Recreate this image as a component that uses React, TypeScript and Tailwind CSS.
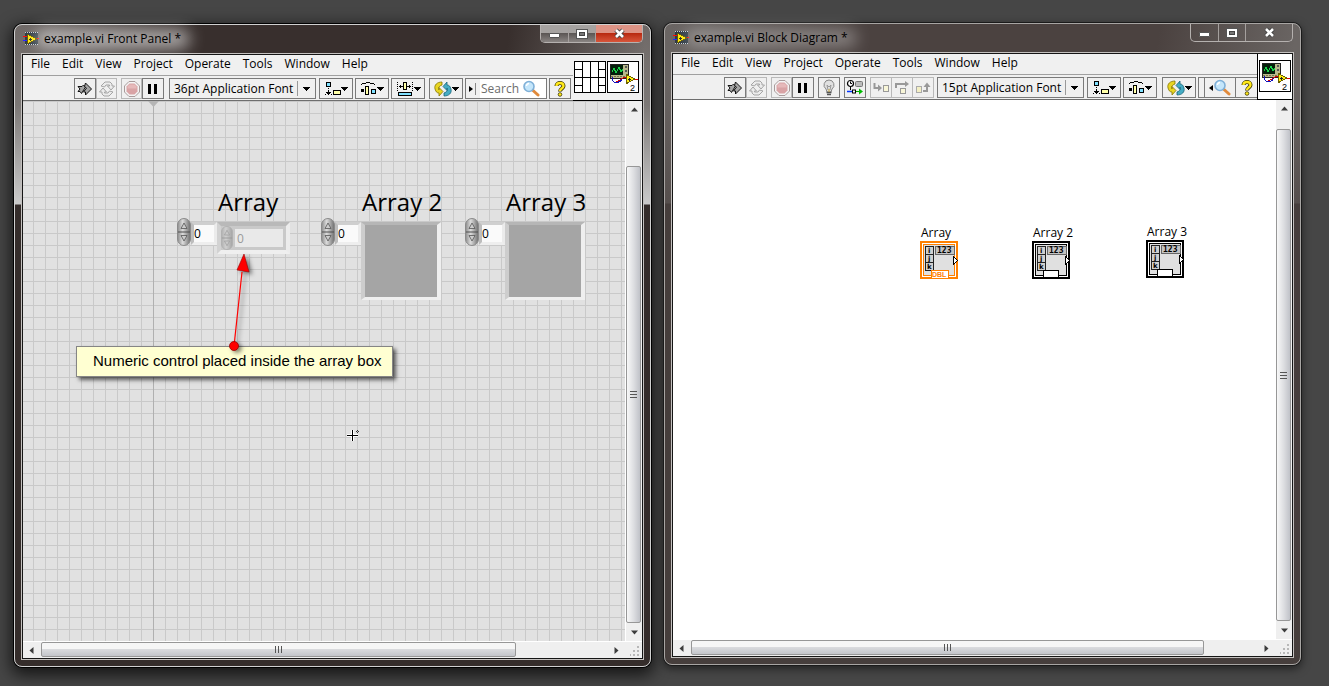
import React from 'react';
import clsx from 'clsx';

const MENUS = ['File', 'Edit', 'View', 'Project', 'Operate', 'Tools', 'Window', 'Help'];

// ── Icons ──
const AppIcon = () => (
  <svg width="16" height="16" viewBox="0 0 16 16" shapeRendering="crispEdges" aria-hidden="true">
    <rect x="2" y="1" width="13" height="13" fill="#2b3640" />
    <path d="M2 1.5h13M2 13.5h13" stroke="#c4ccd2" strokeDasharray="1 1" />
    <path d="M0 5.5h4" stroke="#f00" />
    <path d="M0 9.5h4" stroke="#22f" />
    <path d="M13 7.5h3" stroke="#f00" />
    <path d="M4 3v10l10-5z" fill="#ffe600" stroke="#5d5200" />
    <path d="M6 8.5h3M7.5 7v3" stroke="#222" />
  </svg>
);

const RunIcon = () => (
  <svg width="16" height="14" viewBox="0 0 16 14" fill="#a4a4a4" stroke="#111" aria-hidden="true">
    <path d="M1 4.5h4L6.5 3l2 2L4.5 11.5 3 9.5H1L3 7z" />
    <path d="M8.5 1l6 6-6 6v-3H6.5L9.5 6l-2-1.5z" />
  </svg>
);

const RunLoopIcon = () => (
  <svg width="18" height="16" viewBox="0 0 18 16" fill="#ececec" stroke="#a5a5a5" aria-hidden="true">
    <path d="M3 5l4-4h5l2 2v2h2.5L13 9 9.5 5h2V4H8L6.5 6z" />
    <path d="M15 11l-4 4H6l-2-2v-2H1.5L5 7l3.5 4h-2v1H10l1.5-2z" />
  </svg>
);

const AbortIcon = () => (
  <svg width="16" height="16" viewBox="0 0 16 16" aria-hidden="true">
    <path d="M5 0.5h6L15.5 5v6L11 15.5H5L0.5 11V5z" fill="#f4f4f4" stroke="#a99b9b" />
    <path d="M5.5 2.5h5l3 3v5l-3 3h-5l-3-3v-5z" fill="#d9a3a5" />
    <path d="M5.5 3.5h5l2 2v2h-9v-2z" fill="#e6b9ba" />
  </svg>
);

const PauseIcon = () => (
  <svg width="10" height="12" viewBox="0 0 10 12" shapeRendering="crispEdges" aria-hidden="true">
    <path d="M0 1h3v10H0zM6 1h3v10H6z" fill="#000" />
  </svg>
);

const BulbIcon = () => (
  <svg width="14" height="18" viewBox="0 0 14 18" aria-hidden="true">
    <path d="M7 1a5 5 0 0 0-3 9l1 3h4l1-3a5 5 0 0 0-3-9z" fill="#e0e0e0" stroke="#888" />
    <path d="M5 6l1 5M9 6l-1 5M5 6l2 2 2-2" fill="none" stroke="#999" />
    <path d="M4.5 13.5h5M5 15.5h4" stroke="#555" strokeWidth="1.5" />
    <path d="M7 10v3" stroke="#c9a93c" />
  </svg>
);

const RetainIcon = () => (
  <svg width="18" height="17" viewBox="0 0 18 17" aria-hidden="true">
    <circle cx="4.5" cy="4.5" r="3" fill="#fff" stroke="#000" strokeWidth="1.2" />
    <path d="M4.5 2.5v2h1.5M4.5 8v3" stroke="#000" fill="none" />
    <rect x="9.5" y="2.5" width="7" height="5" rx="1" fill="#bbb" stroke="#777" />
    <path d="M1 12.5h5" stroke="#03f" strokeWidth="1.5" />
    <rect x="6.5" y="11" width="3" height="3" fill="#fff" stroke="#000" />
    <path d="M10 12.5h3" stroke="#0a0" />
    <path d="M13 9.5v6l4-3z" fill="#0b0" />
  </svg>
);

const StepIntoIcon = () => (
  <svg width="17" height="14" viewBox="0 0 17 14" aria-hidden="true">
    <path d="M1.5 2v5H6" stroke="#999" strokeWidth="2" fill="none" />
    <path d="M5 3.5L9 7l-4 3.5z" fill="#999" />
    <rect x="10.5" y="4.5" width="5" height="6" fill="#f8f6d8" stroke="#999" />
  </svg>
);

const StepOverIcon = () => (
  <svg width="17" height="14" viewBox="0 0 17 14" aria-hidden="true">
    <path d="M2 7V3h10" stroke="#999" strokeWidth="2" fill="none" />
    <path d="M11 0l4 3-4 3z" fill="#999" />
    <rect x="6.5" y="7.5" width="5" height="5" fill="#f8f6d8" stroke="#999" />
  </svg>
);

const StepOutIcon = () => (
  <svg width="17" height="14" viewBox="0 0 17 14" aria-hidden="true">
    <rect x="1.5" y="5.5" width="5" height="6" fill="#f3efc4" stroke="#aaa" />
    <path d="M8 10h4V5" stroke="#999" strokeWidth="2" fill="none" />
    <path d="M8.5 6L12 1.5 15.5 6z" fill="#999" />
  </svg>
);

const AlignIcon = () => (
  <svg width="16" height="16" viewBox="0 0 16 16" shapeRendering="crispEdges" aria-hidden="true">
    <rect x="1.5" y="1.5" width="4" height="4" fill="#7fe0ff" stroke="#000" />
    <path d="M3 7h1v1H3zM3 9h1v2H3zM1 11h5v1H1zM2 12h3v1H2zM3 13h1v1H3zM0 14h1v-1H0zM6 13h1v1H6z" fill="#000" />
    <rect x="8.5" y="9.5" width="7" height="4" fill="#ffffa8" stroke="#000" />
  </svg>
);

const DistributeIcon = () => (
  <svg width="17" height="16" viewBox="0 0 17 16" shapeRendering="crispEdges" aria-hidden="true">
    <path d="M1 3h1v1H1zM2 2h4v1H2zM6 1h4v1H6zM10 2h4v1h-4zM14 3h1v1h-1z" fill="#000" />
    <rect x="1" y="8" width="3" height="3" fill="#000" />
    <rect x="5.5" y="5.5" width="3" height="8" fill="#ffffa8" stroke="#000" />
    <rect x="11.5" y="8.5" width="4" height="4" fill="#7fe0ff" stroke="#000" />
  </svg>
);

const ResizeIcon = () => (
  <svg width="18" height="16" viewBox="0 0 18 16" shapeRendering="crispEdges" aria-hidden="true">
    <path d="M1.5 1v10M16.5 1v10" stroke="#000" strokeDasharray="1 1" />
    <path d="M3 5h4v1H3zM11 5h4v1h-4zM4 4h1v3H4zM13 4h1v3h-1z" fill="#000" />
    <rect x="7.5" y="1.5" width="3" height="7" fill="#ffffa8" stroke="#000" />
    <rect x="2.5" y="11.5" width="13" height="3" fill="#7fe0ff" stroke="#000" />
  </svg>
);

const ReorderIcon = () => (
  <svg width="18" height="16" viewBox="0 0 18 16" strokeWidth="0.8" aria-hidden="true">
    <path d="M8 1C3 1 0 4 1 8c1 3 2 4 4 4v3l4-4.5L5 6.5V9C4 7 5 5 8 4z" fill="#e8d522" stroke="#857500" />
    <path d="M10 15c5 0 8-3 7-7-1-3-2-4-4-4V1L9 5.5l4 4V7c1 2 0 4-3 5z" fill="#45acc4" stroke="#16657a" />
  </svg>
);

const SearchGlass = () => (
  <svg width="18" height="17" viewBox="0 0 18 17" className="shrink-0" aria-hidden="true">
    <path d="M10.5 10l5.5 5" stroke="#e08a3c" strokeWidth="3" strokeLinecap="round" />
    <circle cx="7" cy="6.5" r="5" fill="#c4e6fb" stroke="#7fb0d8" strokeWidth="1.6" />
    <path d="M4.5 6a2.5 2.5 0 0 1 2.5-2.5" stroke="#fff" strokeWidth="1.5" fill="none" />
  </svg>
);

const HelpMark = () => (
  <svg width="12" height="16" viewBox="0 0 12 16" aria-hidden="true">
    <path d="M2.5 5c0-4 7-4 7 0 0 2.5-3.5 2.5-3.5 5.5" fill="none" stroke="#3a3500" strokeWidth="4" />
    <path d="M2.5 5c0-4 7-4 7 0 0 2.5-3.5 2.5-3.5 5" fill="none" stroke="#ffe81a" strokeWidth="2.4" />
    <circle cx="6" cy="13.5" r="1.8" fill="#ffe81a" stroke="#3a3500" strokeWidth="0.8" />
  </svg>
);

const ConnectorPane = () => (
  <svg width="32" height="32" viewBox="0 0 32 32" shapeRendering="crispEdges" aria-hidden="true">
    <rect x="0.5" y="0.5" width="31" height="31" fill="#fff" stroke="#000" />
    <path d="M8.5 0v32M16.5 0v32M24.5 0v32M0 16.5h32M0 8.5h8M0 24.5h8M24 8.5h8M24 24.5h8" stroke="#000" />
  </svg>
);

const ViIcon = () => (
  <svg width="32" height="32" viewBox="0 0 32 32" shapeRendering="crispEdges" aria-hidden="true">
    <rect x="0.5" y="0.5" width="31" height="31" fill="#fff" stroke="#000" />
    <rect x="3.5" y="3.5" width="18" height="14" fill="#b9b98c" stroke="#222" />
    <rect x="4" y="4" width="12" height="10" fill="#03200a" />
    <path d="M5 11l2-4 2 5 3-6 2 5 2-3" fill="none" stroke="#18d44a" />
    <path d="M18 5h2v2h-2zM18 9h2v2h-2z" fill="#555" />
    <path d="M4 15.5h16" stroke="#77774f" strokeDasharray="2 1" />
    <path d="M5 16v3c2 4 8 3 10-1" fill="none" stroke="#1010c0" />
    <path d="M9 20c4 2 4-5 10-3M27 18.5h4" fill="none" stroke="#e00000" />
    <path d="M19.5 13.5v9l8-4.5z" fill="#ffee10" stroke="#6b6000" />
    <path d="M21 18h3M22.5 16.5v3" stroke="#222" />
    <text x="23" y="30" fontFamily="Liberation Sans, sans-serif" fontSize="9" fill="#000">2</text>
  </svg>
);

const DropArrow = () => (
  <svg width="7" height="4" viewBox="0 0 7 4" shapeRendering="crispEdges" aria-hidden="true">
    <path d="M0 0h7v1H0zM1 1h5v1H1zM2 2h3v1H2zM3 3h1v1H3z" fill="#000" />
  </svg>
);

// ── Toolbar ──
const ToolButton = ({
  label,
  children,
  className,
  disabled,
}: {
  label: string;
  children: React.ReactNode;
  className?: string;
  disabled?: boolean;
}) => (
  <button
    type="button"
    aria-label={label}
    title={label}
    disabled={disabled}
    className={clsx(
      'flex h-[21px] shrink-0 items-center justify-center border bg-[#f0f0f0]',
      disabled ? 'border-[#b9b9b9]' : 'border-[#7a7a7a]',
      className || 'w-[22px]',
    )}
  >
    {children}
  </button>
);

const FontSelect = ({ value, className }: { value: string; className: string }) => (
  <div className={clsx('relative h-[21px] w-[147px] shrink-0 border border-[#7a7a7a] bg-[#f0f0f0]', className)}>
    <select aria-label="Text settings" className="block h-full w-full appearance-none pl-1 text-xs text-black">
      <option>{value}</option>
    </select>
    <span className="pointer-events-none absolute inset-y-0.5 right-0 flex w-[18px] items-center justify-center border-l border-[#999]">
      <DropArrow />
    </span>
  </div>
);

const RunButtons = () => (
  <>
    <ToolButton label="Run"><RunIcon /></ToolButton>
    <ToolButton label="Run Continuously" disabled className="w-[21px]"><RunLoopIcon /></ToolButton>
    <ToolButton label="Abort Execution" disabled className="ml-1 w-[21px]"><AbortIcon /></ToolButton>
    <ToolButton label="Pause"><PauseIcon /></ToolButton>
  </>
);

const ArrangeButtons = () => (
  <>
    <ToolButton label="Align Objects" className="ml-[3px] w-[34px]"><AlignIcon /><DropArrow /></ToolButton>
    <ToolButton label="Distribute Objects" className="ml-[2px] w-[34px]"><DistributeIcon /><DropArrow /></ToolButton>
  </>
);

const FrontToolbar = () => (
  <>
    <RunButtons />
    <FontSelect value="36pt Application Font" className="ml-[5px]" />
    <ArrangeButtons />
    <ToolButton label="Resize Objects" className="ml-[2px] w-[34px]"><ResizeIcon /><DropArrow /></ToolButton>
    <ToolButton label="Reorder" className="ml-1 w-[34px]"><ReorderIcon /><DropArrow /></ToolButton>
    <div className="ml-[2px] flex h-[21px] w-[82px] shrink-0 items-center border border-[#7a7a7a] bg-[#f0f0f0]">
      <svg width="4" height="6" viewBox="0 0 4 6" className="ml-[3px]" aria-hidden="true">
        <path d="M0 0v6l4-3z" fill="#000" />
      </svg>
      <span className="ml-0.5 mr-1 h-3 w-px bg-[#888]" />
      <div className="flex h-full min-w-0 flex-1 items-center bg-white pr-1.5">
        <input
          aria-label="Search"
          type="text"
          placeholder="Search"
          className="h-full min-w-0 flex-1 bg-transparent pl-px text-xs placeholder:text-[#6d6d6d]"
        />
        <SearchGlass />
      </div>
    </div>
    <ToolButton label="Context Help" className="ml-[2px] w-[22px]"><HelpMark /></ToolButton>
  </>
);

const BlockToolbar = () => (
  <>
    <RunButtons />
    <ToolButton label="Highlight Execution" className="ml-1 w-[22px]"><BulbIcon /></ToolButton>
    <ToolButton label="Retain Wire Values" className="ml-1 w-[22px]"><RetainIcon /></ToolButton>
    <ToolButton label="Step Into" disabled className="ml-1 w-[22px]"><StepIntoIcon /></ToolButton>
    <ToolButton label="Step Over" disabled className="w-[21px] border-l-0"><StepOverIcon /></ToolButton>
    <ToolButton label="Step Out" disabled className="w-[21px] border-l-0"><StepOutIcon /></ToolButton>
    <FontSelect value="15pt Application Font" className="ml-[3px]" />
    <ArrangeButtons />
    <ToolButton label="Reorder" className="ml-[5px] w-[34px]"><ReorderIcon /><DropArrow /></ToolButton>
    <ToolButton label="Search" className="ml-[2px] w-[38px]">
      <span className="mr-1 h-full w-px bg-[#7a7a7a]" />
      <svg width="4" height="6" viewBox="0 0 4 6" aria-hidden="true">
        <path d="M4 0v6L0 3z" fill="#000" />
      </svg>
      <SearchGlass />
    </ToolButton>
    <ToolButton label="Context Help" className="w-[21px] border-x-0"><HelpMark /></ToolButton>
  </>
);

// ── Scroll bars ──
const ScrollArrow = ({ dir }: { dir: 'up' | 'down' | 'left' | 'right' }) => (
  <button type="button" aria-label={`Scroll ${dir}`} className="flex size-[17px] shrink-0 items-center justify-center">
    <svg
      width="7"
      height="7"
      viewBox="0 0 7 7"
      aria-hidden="true"
      className={clsx(
        dir === 'down' && 'rotate-180',
        dir === 'left' && '-rotate-90',
        dir === 'right' && 'rotate-90',
      )}
    >
      <path d="M0 5.5L3.5 1.5 7 5.5z" fill="#3c3c3c" />
    </svg>
  </button>
);

const VerticalBar = ({ thumb }: { thumb: string }) => (
  <div className="flex w-[17px] shrink-0 flex-col border-l border-white bg-[#efefef]">
    <ScrollArrow dir="up" />
    <div
      className={clsx(
        'mb-px mr-px flex flex-1 flex-col items-center justify-center gap-0.5 rounded-xs border border-[#979797] bg-linear-to-r from-[#f8f8f8] via-[#dedfe2] to-[#c0c2c8]',
        thumb,
      )}
    >
      <span className="h-px w-[7px] bg-[#555]" />
      <span className="h-px w-[7px] bg-[#555]" />
      <span className="h-px w-[7px] bg-[#555]" />
    </div>
    <ScrollArrow dir="down" />
  </div>
);

const HorizontalBar = ({ thumb }: { thumb: string }) => (
  <div className="flex h-[17px] shrink-0 border-t border-white bg-[#efefef]">
    <ScrollArrow dir="left" />
    <div
      className={clsx(
        'mb-px ml-px flex flex-1 items-center justify-center gap-0.5 rounded-xs border border-[#979797] bg-linear-to-b from-[#f6f6f6] from-45% via-[#d9dadd] via-50% to-[#c3c5ca]',
        thumb,
      )}
    >
      <span className="h-[7px] w-px bg-[#555]" />
      <span className="h-[7px] w-px bg-[#555]" />
      <span className="h-[7px] w-px bg-[#555]" />
    </div>
    <ScrollArrow dir="right" />
    <div className="flex w-[17px] items-end justify-end p-0.5">
      <svg width="10" height="10" viewBox="0 0 10 10" shapeRendering="crispEdges" aria-hidden="true">
        <path d="M7 0h2v2H7zM7 4h2v2H7zM3 4h2v2H3zM7 8h2v2H7zM3 8h2v2H3zM0 8h1v2H0z" fill="#b8b8b8" />
      </svg>
    </div>
  </div>
);

// ── Window frame ──
interface AppWindowProps {
  title: string;
  active?: boolean;
  className?: string;
  toolbar: React.ReactNode;
  pane: React.ReactNode;
  verticalThumb: string;
  horizontalThumb: string;
  children: React.ReactNode;
}

const CaptionButtons = ({ active }: { active?: boolean }) => (
  <div className="mr-px flex h-[18px] w-[103px] shrink-0 overflow-hidden rounded-b-[5px] border border-t-0 border-[#b5b1af]">
    <button
      type="button"
      aria-label="Minimize"
      className={clsx(
        'flex w-7 items-center justify-center border-r border-[#a5a09e] pt-1',
        active && 'bg-linear-to-b from-[#a5a2a0] from-45% via-[#5c5755] via-50% to-[#8a8583]',
      )}
    >
      <span className="h-[5px] w-[11px] rounded-[1px] border border-[#555] bg-white" />
    </button>
    <button
      type="button"
      aria-label="Maximize"
      className={clsx(
        'flex w-[27px] items-center justify-center border-r border-[#a5a09e]',
        active && 'bg-linear-to-b from-[#a5a2a0] from-45% via-[#5c5755] via-50% to-[#8a8583]',
      )}
    >
      <svg width="12" height="10" viewBox="0 0 12 10" shapeRendering="crispEdges" aria-hidden="true">
        <rect x="0.5" y="0.5" width="11" height="9" fill="#fff" stroke="#555" />
        <rect x="3.5" y="3.5" width="5" height="3" fill="#777" stroke="#444" />
      </svg>
    </button>
    <button
      type="button"
      aria-label="Close"
      className={clsx(
        'flex flex-1 items-center justify-center',
        active && 'bg-linear-to-b from-[#dd9385] from-45% via-[#b92a10] via-50% to-[#d8553a]',
      )}
    >
      <svg width="13" height="11" viewBox="0 0 13 11" aria-hidden="true">
        <path d="M3 2l7 7M10 2L3 9" stroke="#444" strokeWidth="4.5" />
        <path d="M3 2l7 7M10 2L3 9" stroke="#fff" strokeWidth="2.6" />
      </svg>
    </button>
  </div>
);

const AppWindow: React.FC<AppWindowProps> = ({
  title,
  active,
  className,
  toolbar,
  pane,
  verticalThumb,
  horizontalThumb,
  children,
}) => (
  <section
    aria-label={title}
    className={clsx(
      'flex min-w-0 flex-1 flex-col rounded-lg border px-1.5 pb-1.5',
      active
        ? 'border-[#d0d0d0] bg-[linear-gradient(#6f6967,#7c7876_80px,#cacaca_179px,#352d2b_180px)] shadow-[0_0_0_1px_#000,0_5px_16px_3px_rgba(0,0,0,0.7)]'
        : 'border-[#a8a5a3] bg-[linear-gradient(#6a6563,#6a6563_60px,#564f4d_179px,#463e3c_180px)] shadow-[0_0_0_1px_#1a1a1a,0_3px_8px_1px_rgba(0,0,0,0.5)]',
      className,
    )}
  >
    <header
      className={clsx(
        'flex h-7 shrink-0 items-start justify-between',
        active
          ? 'bg-[linear-gradient(100deg,transparent,#382f2d_28%,#382f2d_78%,transparent)]'
          : 'bg-[linear-gradient(100deg,transparent,#4b4240_28%,#4b4240_78%,transparent)]',
      )}
    >
      <div className="flex h-full items-center gap-1 pl-0.5">
        <AppIcon />
        <div className="relative px-px">
          <span
            className={clsx(
              'absolute -inset-x-2 -inset-y-px rounded-full blur-sm',
              active ? 'bg-white/60' : 'bg-white/35',
            )}
          />
          <h1 className="relative whitespace-nowrap text-xs leading-4 text-black">{title}</h1>
        </div>
      </div>
      <CaptionButtons active={active} />
    </header>

    <div className="flex min-h-0 flex-1 flex-col border border-[#c4c1bf]">
      <div className="flex min-h-0 flex-1 flex-col border border-[#151515]">
        <div className="flex shrink-0 bg-[#f0f0f0]">
          <div className="min-w-0 flex-1">
            <nav aria-label="Menu" className="flex h-[21px] items-start gap-3 border-b border-[#a0a0a0] pl-2 text-xs leading-[18px]">
              {MENUS.map((menu) => (
                <button key={menu} type="button">{menu}</button>
              ))}
            </nav>
            <div className="flex h-[25px] border-b border-[#6e6e6e] pl-[51px] pt-0.5">{toolbar}</div>
          </div>
          {pane}
        </div>
        <div className="flex min-h-0 flex-1">
          {children}
          <VerticalBar thumb={verticalThumb} />
        </div>
        <HorizontalBar thumb={horizontalThumb} />
      </div>
    </div>
  </section>
);

// ── Front panel controls ──
const Spinner = ({ faded }: { faded?: boolean }) => (
  <svg
    viewBox="0 0 14 28"
    aria-hidden="true"
    className={clsx('shrink-0', faded ? 'h-6 w-3 opacity-40' : 'ml-px h-7 w-3.5')}
  >
    <defs>
      <linearGradient id={faded ? 'spin-faded' : 'spin'} x1="0" x2="1">
        <stop offset="0" stopColor="#8b8b8b" />
        <stop offset="0.4" stopColor="#dcdcdc" />
        <stop offset="1" stopColor="#6d6d6d" />
      </linearGradient>
    </defs>
    <rect x="0.5" y="0.5" width="13" height="27" rx="6.5" fill={faded ? 'url(#spin-faded)' : 'url(#spin)'} stroke="#8a8a8a" />
    <path d="M1 14h12" stroke="#4e4e4e" />
    <path d="M4 10.5L7 5l3 5.5z" fill="#ccc" stroke="#555" strokeWidth="0.8" />
    <path d="M4 17.5L7 23l3-5.5z" fill="#ccc" stroke="#555" strokeWidth="0.8" />
  </svg>
);

const ArrayControl = ({
  id,
  label,
  className,
  children,
}: {
  id: string;
  label: string;
  className: string;
  children: React.ReactNode;
}) => (
  <div className={clsx('absolute top-[84px] flex', className)}>
    <div className="mt-[33px] flex w-[41px] items-start">
      <Spinner />
      <input
        id={id}
        defaultValue="0"
        className="mt-1 h-[23px] w-[26px] border-[3px] border-b-[#eeeeee] border-l-[#bdbdbd] border-r-[#ebebeb] border-t-[#cfcfcf] bg-[#fafafa] text-xs text-black"
      />
    </div>
    <div>
      <label htmlFor={id} className="ml-px block h-[37px] whitespace-nowrap text-2xl leading-[34px] text-black">
        {label}
      </label>
      {children}
    </div>
  </div>
);

const EmptyShell = () => (
  <div className="h-[78px] w-[80px] border-x-4 border-y-[3px] border-b-[#efefef] border-l-[#cdcdcd] border-r-[#efefef] border-t-[#b6b6b6] bg-[#a5a5a5]" />
);

const FrontPanel = () => (
  <main className="relative min-h-[340px] min-w-0 flex-1 overflow-hidden bg-[#e1e1e1] bg-[linear-gradient(#c9c9c9_1px,transparent_1px),linear-gradient(90deg,#c9c9c9_1px,transparent_1px)] bg-[size:12px_12px] bg-[position:10px_0]">
    {/* origin marker */}
    <div className="absolute inset-y-0 left-[130px] w-px bg-[#b0b0b0]" />
    <svg width="11" height="6" viewBox="0 0 11 6" className="absolute left-[125px] top-0" aria-hidden="true">
      <path d="M0 0h11L5.5 6z" fill="#b5b5b5" />
    </svg>

    <ArrayControl id="array-1" label="Array" className="left-[153px]">
      <div className="flex h-8 w-[73px] items-center border-4 border-b-[#efefef] border-l-[#d2d2d2] border-r-[#ececec] border-t-[#b9b9b9] bg-[#c9c9c9]">
        <Spinner faded />
        <input
          aria-label="Array element"
          disabled
          value="0"
          className="ml-0.5 h-[18px] w-[48px] bg-[#e9e9e9] pl-0.5 text-xs text-[#9a9a9a]"
        />
      </div>
    </ArrayControl>
    <ArrayControl id="array-2" label="Array 2" className="left-[297px]"><EmptyShell /></ArrayControl>
    <ArrayControl id="array-3" label="Array 3" className="left-[441px]"><EmptyShell /></ArrayControl>

    {/* callout */}
    <p className="absolute left-[53px] top-[245px] h-[31px] w-[317px] whitespace-nowrap border border-[#858585] bg-[#ffffd2] pl-4 font-['Liberation_Sans',sans-serif] text-[15px] leading-7 text-black shadow-[3px_3px_4px_rgba(0,0,0,0.6)]">
      Numeric control placed inside the array box
    </p>
    <svg width="40" height="104" viewBox="0 0 40 104" className="absolute left-[203px] top-[150px] drop-shadow-[3px_2px_2px_rgba(0,0,0,0.5)]" aria-hidden="true">
      <path d="M8 95l8-74" stroke="#f00" strokeWidth="1.2" />
      <path d="M18 3l5 18-12-2z" fill="#f00" stroke="#900" strokeWidth="0.6" />
      <circle cx="8" cy="95" r="4.5" fill="#f00" stroke="#900" strokeWidth="0.8" />
    </svg>

    {/* tool cursor */}
    <svg width="14" height="14" viewBox="0 0 14 14" className="absolute left-[324px] top-[327px]" shapeRendering="crispEdges" aria-hidden="true">
      <path d="M5.5 2v11M0 7.5h11" stroke="#fff" strokeWidth="3" />
      <path d="M5.5 2v11M0 7.5h11" stroke="#000" />
      <path d="M10 2h1v1h-1zM9 3h1v1H9zM11 3h1v1h-1zM10 4h1v1h-1z" fill="#333" />
    </svg>
  </main>
);

// ── Block diagram ──
const Terminal = ({ label, color, type, className }: { label: string; color: string; type?: string; className: string }) => (
  <figure className={clsx('absolute', className)}>
    <figcaption className="ml-px h-4 whitespace-nowrap text-xs leading-4 text-black">{label}</figcaption>
    <svg width="38" height="38" viewBox="0 0 38 38" shapeRendering="crispEdges" role="img" aria-label={`${label} terminal`}>
      <rect width="38" height="38" fill={color} />
      <rect x="2" y="2" width="34" height="34" fill="#fff" />
      <rect x="3" y="3" width="32" height="32" fill={color} />
      <rect x="4" y="4" width="30" height="30" fill="#e0e0e0" />
      <path d="M5.5 5.5h8v24h-8zM5.5 13.5h8M5.5 21.5h8" fill="#d0d0d0" stroke="#222" />
      <rect x="15.5" y="5.5" width="19" height="8" fill="#c3c3c3" stroke="#666" />
      <g fontFamily="DejaVu Sans, sans-serif" fontSize="7" fill="#000" fontWeight="bold">
        <text x="8" y="12">i</text>
        <text x="8" y="20">j</text>
        <text x="7" y="28">k</text>
        <text x="17" y="12" fontFamily="DejaVu Sans Mono, monospace" fontSize="8">123</text>
      </g>
      <path d="M33.5 15.5v8l4-4z" fill="#fff" stroke="#000" />
      {type ? (
        <>
          <path d="M11 29.5h17v8H11z" fill="#fff" stroke={color} />
          <text x="12" y="36" fontFamily="Liberation Sans, sans-serif" fontWeight="bold" fontSize="7" fill={color}>{type}</text>
        </>
      ) : (
        <>
          <path d="M11 29h16v8H11z" fill={color} />
          <path d="M12 30h14v6H12z" fill="#fff" />
        </>
      )}
    </svg>
  </figure>
);

const BlockDiagram = () => (
  <main className="relative min-h-[340px] min-w-0 flex-1 overflow-hidden bg-white">
    <Terminal label="Array" color="#ff8000" type="DBL" className="left-[247px] top-[125px]" />
    <Terminal label="Array 2" color="#000" className="left-[359px] top-[125px]" />
    <Terminal label="Array 3" color="#000" className="left-[473px] top-[124px]" />
  </main>
);

export default function App() {
  return (
    <div className="flex min-h-screen gap-[13px] bg-[#464646] pb-[19px] pl-[14px] pr-7 pt-[23px] font-['Open_Sans','Noto_Sans',sans-serif] text-black">
      <AppWindow
        title="example.vi Front Panel *"
        active
        className="mt-px"
        toolbar={<FrontToolbar />}
        pane={
          <div className="flex shrink-0 items-start gap-px border-b border-black pl-px pr-[3px] pt-1.5">
            <ConnectorPane />
            <ViIcon />
          </div>
        }
        verticalThumb="mt-[48px]"
        horizontalThumb="mr-[92px]"
      >
        <FrontPanel />
      </AppWindow>
      <AppWindow
        title="example.vi Block Diagram *"
        className="mb-0.5"
        toolbar={<BlockToolbar />}
        pane={
          <div className="flex shrink-0 items-start border-b border-l border-black bg-white px-px pt-1.5">
            <ViIcon />
          </div>
        }
        verticalThumb="mt-3"
        horizontalThumb="mr-[54px]"
      >
        <BlockDiagram />
      </AppWindow>
    </div>
  );
}
